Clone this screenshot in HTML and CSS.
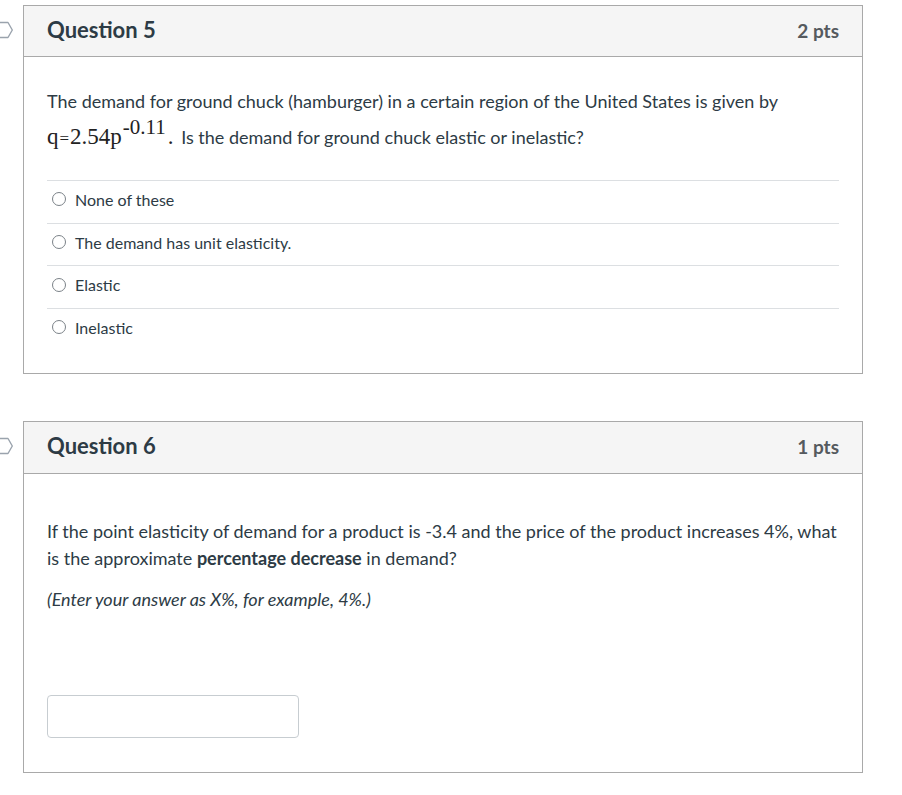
FILE: index.html
```html
<!DOCTYPE html>
<html>
<head>
  <title>Quiz</title>
  <link rel="stylesheet" href="styles.css">
</head>
<body>
  <div class="quiz">

    <div class="question-row">
      <div class="flag">
        <svg width="23" height="51" viewBox="0 0 23 51">
          <path d="M-6 17.5 H8 L12.3 25 L8 32.5 H-6 Z" fill="none" stroke="#9aa3ad" stroke-width="1.4" stroke-linejoin="round"/>
        </svg>
      </div>
      <div class="question">
        <div class="question-header">
          <span class="question-title">Question 5</span>
          <span class="question-points">2 pts</span>
        </div>
        <div class="question-body">
          <p class="question-text q5-text">The demand for ground chuck (hamburger) in a certain region of the United States is given by <span class="formula">q<span class="eq">=</span>2.54p<sup>-0.11</sup>.</span> Is the demand for ground chuck elastic or inelastic?</p>
          <div class="answers">
            <label class="answer"><span class="radio"></span>None of these</label>
            <label class="answer"><span class="radio"></span>The demand has unit elasticity.</label>
            <label class="answer"><span class="radio"></span>Elastic</label>
            <label class="answer"><span class="radio"></span>Inelastic</label>
          </div>
        </div>
      </div>
    </div>

    <div class="question-row">
      <div class="flag">
        <svg width="23" height="51" viewBox="0 0 23 51">
          <path d="M-6 17.5 H8 L12.3 25 L8 32.5 H-6 Z" fill="none" stroke="#9aa3ad" stroke-width="1.4" stroke-linejoin="round"/>
        </svg>
      </div>
      <div class="question">
        <div class="question-header q6-header">
          <span class="question-title">Question 6</span>
          <span class="question-points">1 pts</span>
        </div>
        <div class="question-body q6-body">
          <p class="question-text q6-text">If the point elasticity of demand for a product is -3.4 and the price of the product increases 4%, what is the approximate <strong>percentage decrease</strong> in demand?</p>
          <p class="question-text q6-hint"><em>(Enter your answer as X%, for example, 4%.)</em></p>
          <input type="text" class="answer-input">
        </div>
      </div>
    </div>

  </div>
</body>
</html>
```

FILE: styles.css
```css
body {
  margin: 0;
  padding: 0;
  font-family: Lato, "Open Sans", sans-serif;
  color: #2d3b45;
  background-color: #fff;
}

.quiz {
  padding-top: 5px;
}

.question-row {
  display: flex;
  margin-bottom: 47px;
}

.flag {
  flex: none;
  width: 23px;
}

.flag svg {
  display: block;
  overflow: visible;
}

.question {
  flex: none;
  width: 840px;
  box-sizing: border-box;
  border: 1px solid #a9a9a9;
}

.question-header {
  display: flex;
  justify-content: space-between;
  align-items: center;
  height: 50px;
  padding: 0 23px;
  background-color: #f5f5f5;
  border-bottom: 1px solid #a9a9a9;
}

.q6-header {
  height: 51px;
}

.question-title {
  font-size: 22px;
  font-weight: bold;
  color: #2d3b45;
  margin-top: -3px;
}

.question-points {
  font-size: 19px;
  font-weight: bold;
  color: #555a5e;
  margin-top: -2px;
}

.question-body {
  padding: 0 23px 22px;
}

.question-text {
  margin: 0;
  font-size: 18px;
}

.q5-text {
  padding-top: 27px;
  line-height: 35px;
  margin-bottom: 24px;
}

.formula {
  font-family: "Liberation Serif", serif;
  font-size: 23px;
  color: #222;
  margin-right: 3px;
}

.formula .eq {
  font-size: 17px;
  margin: 0 1px;
}

.formula sup {
  font-size: 21px;
  line-height: 0;
  vertical-align: 10px;
  margin: 0 2px 0 1px;
}

.answers {
  display: flex;
  flex-direction: column;
}

.answer {
  display: flex;
  align-items: center;
  height: 42.7px;
  padding-bottom: 5px;
  box-sizing: border-box;
  border-top: 1px solid #dcdfe2;
  font-size: 16px;
  color: #2d3b45;
}

.radio {
  width: 12px;
  height: 12px;
  border: 1px solid #7b8288;
  border-radius: 50%;
  margin: 0 9px 0 5px;
  background-color: #fff;
}

.q6-body {
  padding-top: 44px;
  padding-bottom: 34px;
}

.q6-text {
  line-height: 27px;
}

.q6-hint {
  margin-top: 14px;
  line-height: 27px;
}

.answer-input {
  display: block;
  margin-top: 82px;
  width: 252px;
  height: 43px;
  box-sizing: border-box;
  border: 1px solid #c7cdd1;
  border-radius: 4px;
  font-family: Lato, sans-serif;
  font-size: 15px;
}
```
